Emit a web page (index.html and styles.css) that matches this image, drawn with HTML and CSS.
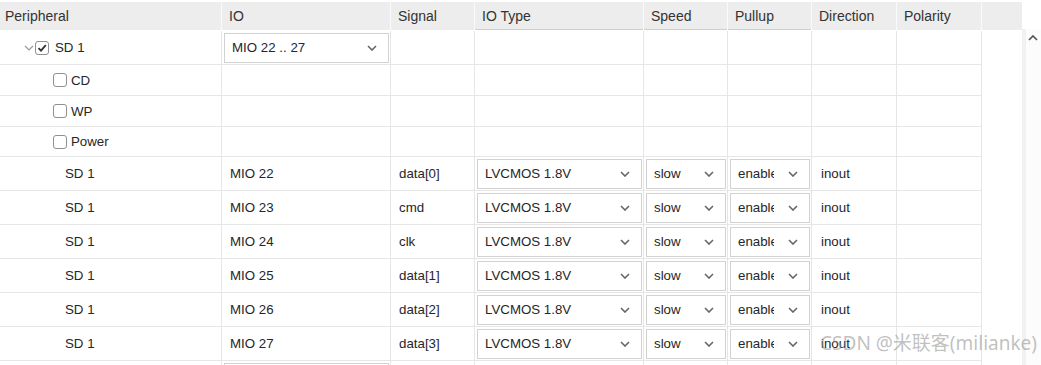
FILE: index.html
```html
<!DOCTYPE html>
<html>
<head>
<meta charset="utf-8">
<link rel="stylesheet" href="styles.css">
</head>
<body>
<div class="screen">
  <div class="table">
    <div class="row head">
      <div class="h first">Peripheral</div>
      <div class="h">IO</div>
      <div class="h">Signal</div>
      <div class="h ul">IO Type</div>
      <div class="h ul">Speed</div>
      <div class="h ul">Pullup</div>
      <div class="h">Direction</div>
      <div class="h">Polarity</div>
      <div class="h fill"></div>
    </div>

    <div class="row r34">
      <div class="c tree">
        <svg class="exp" width="10" height="6" viewBox="0 0 10 6"><path d="M1 1 L5 5 L9 1" fill="none" stroke="#9a9a9a" stroke-width="1.2"/></svg>
        <span class="cb on"><svg width="12" height="12" viewBox="0 0 12 12"><path d="M2.5 6.2 L5 8.7 L9.8 3.2" fill="none" stroke="#333" stroke-width="1.8"/></svg></span>
        <span class="lbl">SD 1</span>
      </div>
      <div class="c ddc"><div class="dd"><span class="dd-t">MIO 22 .. 27</span><svg class="chev" width="10" height="6" viewBox="0 0 10 6"><path d="M1 1 L5 5 L9 1" fill="none" stroke="#666" stroke-width="1.6"/></svg></div></div>
      <div class="c"></div><div class="c"></div><div class="c"></div><div class="c"></div><div class="c"></div><div class="c"></div><div class="f"></div>
    </div>

    <div class="row r31">
      <div class="c child"><span class="cb"></span><span class="lbl2">CD</span></div>
      <div class="c"></div><div class="c"></div><div class="c"></div><div class="c"></div><div class="c"></div><div class="c"></div><div class="c"></div><div class="f"></div>
    </div>
    <div class="row r31">
      <div class="c child"><span class="cb"></span><span class="lbl2">WP</span></div>
      <div class="c"></div><div class="c"></div><div class="c"></div><div class="c"></div><div class="c"></div><div class="c"></div><div class="c"></div><div class="f"></div>
    </div>
    <div class="row r30">
      <div class="c child"><span class="cb"></span><span class="lbl2">Power</span></div>
      <div class="c"></div><div class="c"></div><div class="c"></div><div class="c"></div><div class="c"></div><div class="c"></div><div class="c"></div><div class="f"></div>
    </div>

    <div class="row r34">
      <div class="c per">SD 1</div><div class="c txt">MIO 22</div><div class="c txt">data[0]</div>
      <div class="c ddc"><div class="dd"><span class="dd-t">LVCMOS 1.8V</span><svg class="chev" width="10" height="6" viewBox="0 0 10 6"><path d="M1 1 L5 5 L9 1" fill="none" stroke="#666" stroke-width="1.6"/></svg></div></div>
      <div class="c ddc"><div class="dd"><span class="dd-t">slow</span><svg class="chev" width="10" height="6" viewBox="0 0 10 6"><path d="M1 1 L5 5 L9 1" fill="none" stroke="#666" stroke-width="1.6"/></svg></div></div>
      <div class="c ddc"><div class="dd"><span class="dd-t clip">enable</span><svg class="chev" width="10" height="6" viewBox="0 0 10 6"><path d="M1 1 L5 5 L9 1" fill="none" stroke="#666" stroke-width="1.6"/></svg></div></div>
      <div class="c dir">inout</div><div class="c"></div><div class="f"></div>
    </div>
    <div class="row r34">
      <div class="c per">SD 1</div><div class="c txt">MIO 23</div><div class="c txt">cmd</div>
      <div class="c ddc"><div class="dd"><span class="dd-t">LVCMOS 1.8V</span><svg class="chev" width="10" height="6" viewBox="0 0 10 6"><path d="M1 1 L5 5 L9 1" fill="none" stroke="#666" stroke-width="1.6"/></svg></div></div>
      <div class="c ddc"><div class="dd"><span class="dd-t">slow</span><svg class="chev" width="10" height="6" viewBox="0 0 10 6"><path d="M1 1 L5 5 L9 1" fill="none" stroke="#666" stroke-width="1.6"/></svg></div></div>
      <div class="c ddc"><div class="dd"><span class="dd-t clip">enable</span><svg class="chev" width="10" height="6" viewBox="0 0 10 6"><path d="M1 1 L5 5 L9 1" fill="none" stroke="#666" stroke-width="1.6"/></svg></div></div>
      <div class="c dir">inout</div><div class="c"></div><div class="f"></div>
    </div>
    <div class="row r34">
      <div class="c per">SD 1</div><div class="c txt">MIO 24</div><div class="c txt">clk</div>
      <div class="c ddc"><div class="dd"><span class="dd-t">LVCMOS 1.8V</span><svg class="chev" width="10" height="6" viewBox="0 0 10 6"><path d="M1 1 L5 5 L9 1" fill="none" stroke="#666" stroke-width="1.6"/></svg></div></div>
      <div class="c ddc"><div class="dd"><span class="dd-t">slow</span><svg class="chev" width="10" height="6" viewBox="0 0 10 6"><path d="M1 1 L5 5 L9 1" fill="none" stroke="#666" stroke-width="1.6"/></svg></div></div>
      <div class="c ddc"><div class="dd"><span class="dd-t clip">enable</span><svg class="chev" width="10" height="6" viewBox="0 0 10 6"><path d="M1 1 L5 5 L9 1" fill="none" stroke="#666" stroke-width="1.6"/></svg></div></div>
      <div class="c dir">inout</div><div class="c"></div><div class="f"></div>
    </div>
    <div class="row r34">
      <div class="c per">SD 1</div><div class="c txt">MIO 25</div><div class="c txt">data[1]</div>
      <div class="c ddc"><div class="dd"><span class="dd-t">LVCMOS 1.8V</span><svg class="chev" width="10" height="6" viewBox="0 0 10 6"><path d="M1 1 L5 5 L9 1" fill="none" stroke="#666" stroke-width="1.6"/></svg></div></div>
      <div class="c ddc"><div class="dd"><span class="dd-t">slow</span><svg class="chev" width="10" height="6" viewBox="0 0 10 6"><path d="M1 1 L5 5 L9 1" fill="none" stroke="#666" stroke-width="1.6"/></svg></div></div>
      <div class="c ddc"><div class="dd"><span class="dd-t clip">enable</span><svg class="chev" width="10" height="6" viewBox="0 0 10 6"><path d="M1 1 L5 5 L9 1" fill="none" stroke="#666" stroke-width="1.6"/></svg></div></div>
      <div class="c dir">inout</div><div class="c"></div><div class="f"></div>
    </div>
    <div class="row r34">
      <div class="c per">SD 1</div><div class="c txt">MIO 26</div><div class="c txt">data[2]</div>
      <div class="c ddc"><div class="dd"><span class="dd-t">LVCMOS 1.8V</span><svg class="chev" width="10" height="6" viewBox="0 0 10 6"><path d="M1 1 L5 5 L9 1" fill="none" stroke="#666" stroke-width="1.6"/></svg></div></div>
      <div class="c ddc"><div class="dd"><span class="dd-t">slow</span><svg class="chev" width="10" height="6" viewBox="0 0 10 6"><path d="M1 1 L5 5 L9 1" fill="none" stroke="#666" stroke-width="1.6"/></svg></div></div>
      <div class="c ddc"><div class="dd"><span class="dd-t clip">enable</span><svg class="chev" width="10" height="6" viewBox="0 0 10 6"><path d="M1 1 L5 5 L9 1" fill="none" stroke="#666" stroke-width="1.6"/></svg></div></div>
      <div class="c dir">inout</div><div class="c"></div><div class="f"></div>
    </div>
    <div class="row r34">
      <div class="c per">SD 1</div><div class="c txt">MIO 27</div><div class="c txt">data[3]</div>
      <div class="c ddc"><div class="dd"><span class="dd-t">LVCMOS 1.8V</span><svg class="chev" width="10" height="6" viewBox="0 0 10 6"><path d="M1 1 L5 5 L9 1" fill="none" stroke="#666" stroke-width="1.6"/></svg></div></div>
      <div class="c ddc"><div class="dd"><span class="dd-t">slow</span><svg class="chev" width="10" height="6" viewBox="0 0 10 6"><path d="M1 1 L5 5 L9 1" fill="none" stroke="#666" stroke-width="1.6"/></svg></div></div>
      <div class="c ddc"><div class="dd"><span class="dd-t clip">enable</span><svg class="chev" width="10" height="6" viewBox="0 0 10 6"><path d="M1 1 L5 5 L9 1" fill="none" stroke="#666" stroke-width="1.6"/></svg></div></div>
      <div class="c dir">inout</div><div class="c"></div><div class="f"></div>
    </div>
    <div class="row r34">
      <div class="c"></div>
      <div class="c ddc"><div class="dd"><span class="dd-t">MIO 40 .. 45</span><svg class="chev" width="10" height="6" viewBox="0 0 10 6"><path d="M1 1 L5 5 L9 1" fill="none" stroke="#666" stroke-width="1.6"/></svg></div></div>
      <div class="c"></div><div class="c"></div><div class="c"></div><div class="c"></div><div class="c"></div><div class="c"></div><div class="f"></div>
    </div>
  </div>
  <div class="scrollbar">
    <svg class="up" width="10" height="6" viewBox="0 0 10 6"><path d="M1 5 L5 1 L9 5" fill="none" stroke="#555" stroke-width="1.7"/></svg>
  </div>
  <div class="watermark">CSDN @米联客(milianke)</div>
</div>
</body>
</html>
```

FILE: styles.css
```css
* { box-sizing: border-box; }
body {
  margin: 0;
  background: #fff;
  font-family: "Liberation Sans", Arial, sans-serif;
  color: #262626;
}
.screen {
  position: relative;
  width: 1041px;
  height: 365px;
  overflow: hidden;
  display: flex;
}
.table {
  width: 1022px;
  flex: none;
  padding-top: 2px;
}
.row {
  display: grid;
  grid-template-columns: 222px 169px 84px 169px 84px 84px 85px 85px 40px;
}
.head {
  height: 29px;
  font-size: 14px;
  color: #333;
}
.h {
  height: 28px;
  background: #ededed;
  border-right: 1px solid #fafafa;
  display: flex;
  align-items: center;
  padding-left: 7px;
}
.h.first { padding-left: 5px; }
.h.ul { box-shadow: inset 0 -1px 0 #cfcfcf; }
.h.fill { border-right: none; }

.r34 { height: 34px; }
.r31 { height: 31px; }
.r30 { height: 30px; }

.c {
  border-right: 1px solid #e6e6e6;
  border-bottom: 1px solid #e6e6e6;
  display: flex;
  align-items: center;
  font-size: 13.3px;
  white-space: nowrap;
  overflow: hidden;
}
.f { background: #fff; }

.tree { padding-left: 24px; }
.exp { margin-right: 1px; }
.cb {
  width: 14px;
  height: 14px;
  border: 1px solid #909090;
  border-radius: 3px;
  background: #fff;
  display: flex;
  align-items: center;
  justify-content: center;
  flex: none;
}
.lbl { margin-left: 6px; }
.child { padding-left: 53px; }
.lbl2 { margin-left: 4px; }

.per { padding-left: 65px; }
.txt { padding-left: 8px; }
.dir { padding-left: 9px; }

.ddc { padding: 0 1px 0 2px; }
.dd {
  flex: 1;
  height: 30px;
  border: 1px solid #d2d2d2;
  background: #fff;
  display: flex;
  align-items: center;
  padding: 0 11px 0 7px;
  min-width: 0;
}
.dd-t {
  flex: 1;
  min-width: 0;
  overflow: hidden;
  white-space: nowrap;
  margin-right: 12px;
}
.dd-t.clip { margin-right: 14px; }
.chev { flex: none; }

.scrollbar {
  width: 19px;
  flex: none;
  margin-top: 29px;
  background: linear-gradient(to right, #f1f1f1 0, #f1f1f1 4px, #fcfcfc 4px);
  display: flex;
  justify-content: center;
  padding-top: 6px;
  padding-left: 2px;
}
.up { display: block; }

.watermark {
  position: absolute;
  right: 4px;
  top: 330px;
  font-family: "Noto Sans", "Noto Sans CJK SC", sans-serif;
  font-size: 19px;
  line-height: 26px;
  color: rgba(140, 140, 140, 0.55);
  white-space: nowrap;
}
```
